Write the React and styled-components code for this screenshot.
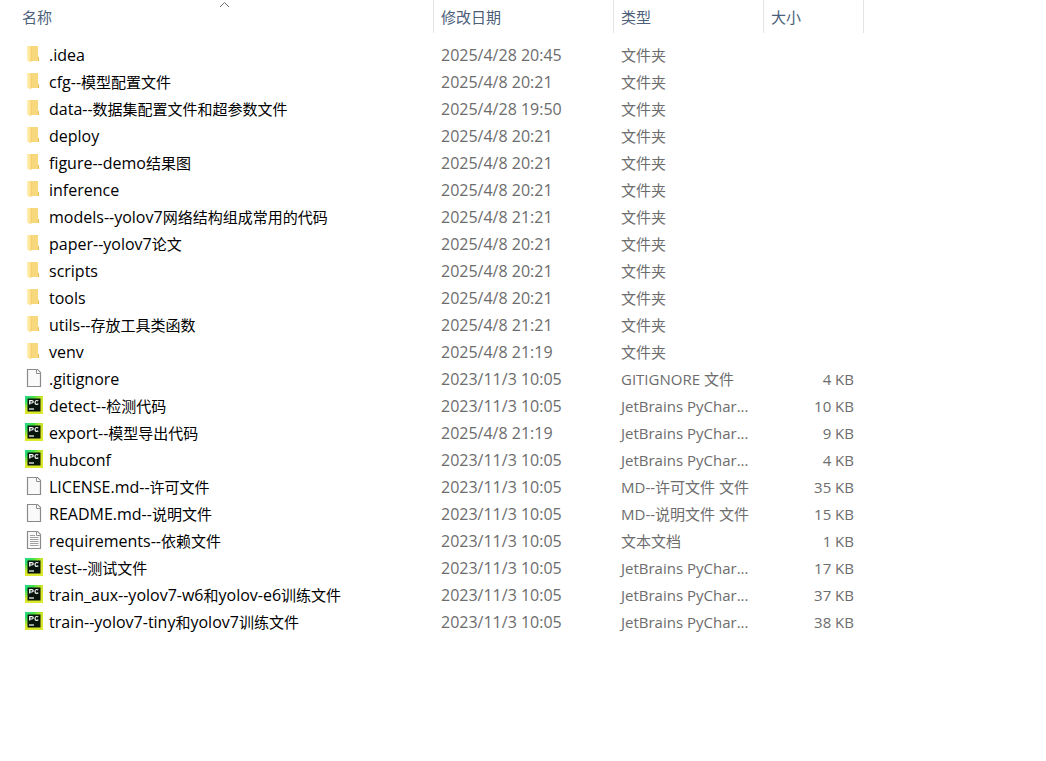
import styled, { createGlobalStyle } from "styled-components";

const GlobalStyle = createGlobalStyle`
    body {
        margin: 0;
        background-color: #fff;
        font-family: "Open Sans", "Noto Sans CJK SC", sans-serif;
        font-size: 16px;
        color: #000;
    }
`
const Explorer = styled.main`
    padding: 0 16px 0 15px;
`
const FileTable = styled.table`
    width: 849px;
    max-width: 100%;
    table-layout: fixed;
    border-collapse: separate;
    border-spacing: 0;
`
const Column = styled.col`
    width: ${({ $width }) => $width};
`
const HeadCell = styled.th`
    position: relative;
    height: 33px;
    padding: 0;
    border-right: 1px solid #e5e5e5;
    text-align: left;
`
const SortButton = styled.button`
    display: block;
    width: 100%;
    padding: 0 7px;
    border: none;
    background: none;
    color: #4c607a;
    font-family: inherit;
    font-size: 15px;
    line-height: 32px;
    text-align: left;
    cursor: pointer;
    &:hover{
        background-color: #d9ebf9;
    }
`
const SortMark = styled.svg`
    position: absolute;
    top: 1px;
    left: 50%;
    margin-left: -5px;
`
const Body = styled.tbody`
    &:before{
        content: "";
        display: table-row;
        height: 8px;
    }
`
const Row = styled.tr`
    height: 27px;
    &:hover{
        background-color: #e5f3ff;
    }
`
const Cell = styled.td`
    padding: 0 7px;
    color: #6d6d6d;
    line-height: 26px;
    white-space: nowrap;
`
const TypeCell = styled(Cell)`
    font-size: 15px;
`
const SizeCell = styled(Cell)`
    padding-right: 10px;
    font-size: 15px;
    text-align: right;
`
const NameCell = styled(Cell)`
    padding: 0 10px;
    color: #000;
`
const FileLabel = styled.div`
    display: flex;
    align-items: center;
    gap: 6px;
`
const Icon = styled.svg`
    flex: none;
    display: block;
    margin-bottom: 2px;
`
const Han = styled.span`
    font-size: 15px;
`

const FolderIcon = () => (
    <Icon width="18" height="20" viewBox="0 0 18 20" aria-hidden="true">
        <defs>
            <linearGradient id="flap" x1="0" y1="0" x2="1" y2="0">
                <stop offset="0" stopColor="#fff0b8" />
                <stop offset="1" stopColor="#ffe08a" />
            </linearGradient>
        </defs>
        <path d="M4 2h9v10.5l1 1V17H4z" fill="#f7d87c" />
        <path d="M13 12.5l1 1V17h-1z" fill="#e8bd55" />
        <path d="M2 2h2.5L6 3.5V18.500l-4-2z" fill="url(#flap)" />
        <path d="M6.2 3.5v14" stroke="#e9c15c" strokeWidth=".5" />
    </Icon>
)

const PageIcon = ({ lines }) => (
    <Icon width="18" height="20" viewBox="0 0 18 20" aria-hidden="true">
        <path d="M2.5 1.5h10l3 3v14h-13z" fill="#fafafa" stroke="#8a8a8a" strokeWidth="1.2" />
        <path d="M11.5 1.5v4h4" fill="#fff" stroke="#909090" />
        {lines && <path d="M5 5.5h5M5 7.5h8.5M5 9.5h8.5M5 11.5h8.5M5 13.5h8.5M5 15.5h8.5" stroke="#a0a0a0" />}
    </Icon>
)

const PycharmIcon = () => (
    <Icon width="18" height="20" viewBox="0 0 18 20" aria-hidden="true">
        <defs>
            <linearGradient id="edge" x1="0" y1="0" x2="1" y2=".6">
                <stop offset="0" stopColor="#1fd98d" />
                <stop offset=".35" stopColor="#3fe04a" />
                <stop offset=".7" stopColor="#c4e62c" />
                <stop offset="1" stopColor="#e6e22e" />
            </linearGradient>
            <linearGradient id="base" x1="0" y1="0" x2="0" y2="1">
                <stop offset=".3" stopColor="#dbe82c" stopOpacity="0" />
                <stop offset=".8" stopColor="#dbe82c" />
            </linearGradient>
        </defs>
        <path d="M0 1h18v18H0z" fill="url(#edge)" />
        <path d="M0 1h18v18H0z" fill="url(#base)" />
        <path d="M2.5 3.5h13v13h-13z" fill="#07140c" />
        <path d="M4.7 9.5V5.6h2.2q1.3 0 1.3 1.2T6.9 8H5" fill="none" stroke="#fff" strokeWidth="1.2" />
        <path d="M13.3 6q-.8-.5-1.6-.5-1.7 0-1.7 1.9t1.7 1.9q.8 0 1.6-.5" fill="none" stroke="#fff" strokeWidth="1.2" />
        <path d="M4 14h5" fill="none" stroke="#fff" strokeWidth="1.2" />
    </Icon>
)

const icons = {
    folder: <FolderIcon />,
    page: <PageIcon />,
    text: <PageIcon lines />,
    pycharm: <PycharmIcon />,
}

const PY = "JetBrains PyChar..."

const files = [
    ["folder", ".idea", "2025/4/28 20:45", "文件夹"],
    ["folder", "cfg--模型配置文件", "2025/4/8 20:21", "文件夹"],
    ["folder", "data--数据集配置文件和超参数文件", "2025/4/28 19:50", "文件夹"],
    ["folder", "deploy", "2025/4/8 20:21", "文件夹"],
    ["folder", "figure--demo结果图", "2025/4/8 20:21", "文件夹"],
    ["folder", "inference", "2025/4/8 20:21", "文件夹"],
    ["folder", "models--yolov7网络结构组成常用的代码", "2025/4/8 21:21", "文件夹"],
    ["folder", "paper--yolov7论文", "2025/4/8 20:21", "文件夹"],
    ["folder", "scripts", "2025/4/8 20:21", "文件夹"],
    ["folder", "tools", "2025/4/8 20:21", "文件夹"],
    ["folder", "utils--存放工具类函数", "2025/4/8 21:21", "文件夹"],
    ["folder", "venv", "2025/4/8 21:19", "文件夹"],
    ["page", ".gitignore", "2023/11/3 10:05", "GITIGNORE 文件", "4 KB"],
    ["pycharm", "detect--检测代码", "2023/11/3 10:05", PY, "10 KB"],
    ["pycharm", "export--模型导出代码", "2025/4/8 21:19", PY, "9 KB"],
    ["pycharm", "hubconf", "2023/11/3 10:05", PY, "4 KB"],
    ["page", "LICENSE.md--许可文件", "2023/11/3 10:05", "MD--许可文件 文件", "35 KB"],
    ["page", "README.md--说明文件", "2023/11/3 10:05", "MD--说明文件 文件", "15 KB"],
    ["text", "requirements--依赖文件", "2023/11/3 10:05", "文本文档", "1 KB"],
    ["pycharm", "test--测试文件", "2023/11/3 10:05", PY, "17 KB"],
    ["pycharm", "train_aux--yolov7-w6和yolov-e6训练文件", "2023/11/3 10:05", PY, "37 KB"],
    ["pycharm", "train--yolov7-tiny和yolov7训练文件", "2023/11/3 10:05", PY, "38 KB"],
]

// Chinese runs are set a little smaller than the Latin ones
const Label = ({ text }) => (
    <span>
        {text.split(/([\u4e00-\u9fff]+)/).map((part, i) => (i % 2 ? <Han key={i}>{part}</Han> : part))}
    </span>
)

const App = () => {
    return(
        <>
            <GlobalStyle />
            <Explorer>
                <FileTable>
                    <colgroup>
                        <Column $width="419px" />
                        <Column $width="180px" />
                        <Column $width="150px" />
                        <Column $width="100px" />
                    </colgroup>
                    <thead>
                        <tr>
                            <HeadCell aria-sort="ascending">
                                <SortButton>名称</SortButton>
                                <SortMark width="11" height="7" viewBox="0 0 11 7" aria-hidden="true">
                                    <path d="M1 6l4.5-4.5L10 6" fill="none" stroke="#6d6d6d" />
                                </SortMark>
                            </HeadCell>
                            <HeadCell><SortButton>修改日期</SortButton></HeadCell>
                            <HeadCell><SortButton>类型</SortButton></HeadCell>
                            <HeadCell><SortButton>大小</SortButton></HeadCell>
                        </tr>
                    </thead>
                    <Body>
                        {files.map(([icon, name, date, type, size]) => (
                            <Row key={name}>
                                <NameCell>
                                    <FileLabel>{icons[icon]}<Label text={name} /></FileLabel>
                                </NameCell>
                                <Cell>{date}</Cell>
                                <TypeCell>{type}</TypeCell>
                                <SizeCell>{size}</SizeCell>
                            </Row>
                        ))}
                    </Body>
                </FileTable>
            </Explorer>
        </>
    )
};

export default App;
